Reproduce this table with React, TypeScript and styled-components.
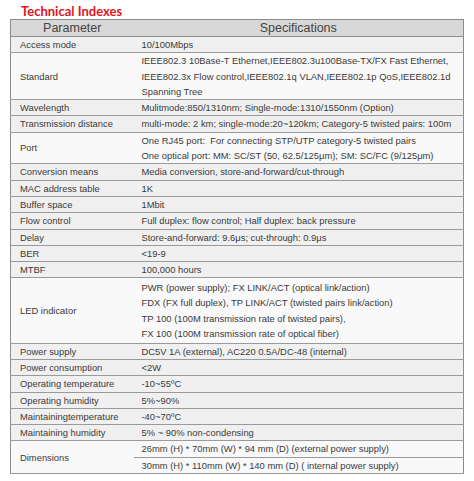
import React from "react";
import styled, { createGlobalStyle } from "styled-components";

const GlobalStyle = createGlobalStyle`
  html, body { margin: 0; padding: 0; background: #ffffff; }
  body { font-family: "Liberation Sans", Arial, Helvetica, sans-serif; }
`;

const Page = styled.div`
  width: 474px;
  height: 481px;
  box-sizing: border-box;
  padding-left: 10px;
  overflow: hidden;
`;

const Title = styled.h2`
  margin: 0;
  padding: 3px 0 0 11px;
  height: 16px;
  font-family: Lato, "Open Sans", sans-serif;
  font-weight: 700;
  font-size: 13px;
  line-height: 16px;
  color: #e2141d;
`;

const Table = styled.table`
  width: 454px;
  border-collapse: collapse;
  table-layout: fixed;
  border: 1px solid #8c8c8c;
`;

const HeadCell = styled.th`
  padding: 0;
  height: 16px;
  line-height: 16px;
  background: #d8d8d8;
  color: #444444;
  font-weight: 400;
  font-size: 12.5px;
  text-align: center;
  border-bottom: 1px solid #8c8c8c;
`;

const Cell = styled.td<{ $light?: boolean; $pad?: number }>`
  font-size: 9.4px;
  line-height: 15.3px;
  color: #3a3a3a;
  white-space: pre;
  vertical-align: middle;
  background: ${(p) => (p.$light ? "#f9f9f9" : "#f0f0f0")};
  padding: ${(p) => p.$pad ?? 0}px 0 ${(p) => p.$pad ?? 0}px 0;
  border-bottom: 1px solid #9a9a9a;
`;

const ParamCell = styled(Cell)`
  padding-left: 9px;
`;

const SpecCell = styled(Cell)`
  padding-left: 8px;
`;

const Line = styled.div`
  display: block;
`;

type Row = { p: string; s: string[]; pad?: number };

const rows: Row[] = [
  { p: "Access mode", s: ["10/100Mbps"] },
  {
    p: "Standard",
    s: [
      "IEEE802.3 10Base-T Ethernet,IEEE802.3u100Base-TX/FX Fast Ethernet,",
      "IEEE802.3x Flow control,IEEE802.1q VLAN,IEEE802.1p QoS,IEEE802.1d",
      "Spanning Tree",
    ],
  },
  { p: "Wavelength", s: ["Mulitmode:850/1310nm; Single-mode:1310/1550nm (Option)"] },
  {
    p: "Transmission distance",
    s: ["multi-mode: 2 km; single-mode:20~120km; Category-5 twisted pairs: 100m"],
  },
  {
    p: "Port",
    s: [
      "One RJ45 port:  For connecting STP/UTP category-5 twisted pairs",
      "One optical port: MM: SC/ST (50, 62.5/125μm); SM: SC/FC (9/125μm)",
    ],
  },
  { p: "Conversion means", s: ["Media conversion, store-and-forward/cut-through"] },
  { p: "MAC address table", s: ["1K"] },
  { p: "Buffer space", s: ["1Mbit"] },
  { p: "Flow control", s: ["Full duplex: flow control; Half duplex: back pressure"] },
  { p: "Delay", s: ["Store-and-forward: 9.6μs; cut-through: 0.9μs"] },
  { p: "BER", s: ["<19-9"] },
  { p: "MTBF", s: ["100,000 hours"] },
  {
    p: "LED indicator",
    pad: 1.5,
    s: [
      "PWR (power supply); FX LINK/ACT (optical link/action)",
      "FDX (FX full duplex), TP LINK/ACT (twisted pairs link/action)",
      "TP 100 (100M transmission rate of twisted pairs),",
      "FX 100 (100M transmission rate of optical fiber)",
    ],
  },
  { p: "Power supply", s: ["DC5V 1A (external), AC220 0.5A/DC-48 (internal)"] },
  { p: "Power consumption", s: ["<2W"] },
  { p: "Operating temperature", s: ["-10~55ºC"] },
  { p: "Operating humidity", s: ["5%~90%"] },
  { p: "Maintainingtemperature", s: ["-40~70ºC"] },
  { p: "Maintaining humidity", s: ["5% ~ 90% non-condensing"] },
];

const dimensions = [
  "26mm (H) * 70mm (W) * 94 mm (D) (external power supply)",
  "30mm (H) * 110mm (W) * 140 mm (D) ( internal power supply)",
];

export default function App() {
  return (
    <Page>
      <GlobalStyle />
      <Title>Technical Indexes</Title>
      <Table>
        <colgroup>
          <col style={{ width: 123 }} />
          <col />
        </colgroup>
        <thead>
          <tr>
            <HeadCell>Parameter</HeadCell>
            <HeadCell>Specifications</HeadCell>
          </tr>
        </thead>
        <tbody>
          {rows.map((r) => {
            const light = r.s.length > 1;
            return (
              <tr key={r.p}>
                <ParamCell $light={light} $pad={r.pad}>{r.p}</ParamCell>
                <SpecCell $light={light} $pad={r.pad}>
                  {r.s.map((l) => (
                    <Line key={l}>{l}</Line>
                  ))}
                </SpecCell>
              </tr>
            );
          })}
          <tr>
            <ParamCell rowSpan={2} $light>
              Dimensions
            </ParamCell>
            <SpecCell $light>{dimensions[0]}</SpecCell>
          </tr>
          <tr>
            <SpecCell $light>{dimensions[1]}</SpecCell>
          </tr>
        </tbody>
      </Table>
    </Page>
  );
}
